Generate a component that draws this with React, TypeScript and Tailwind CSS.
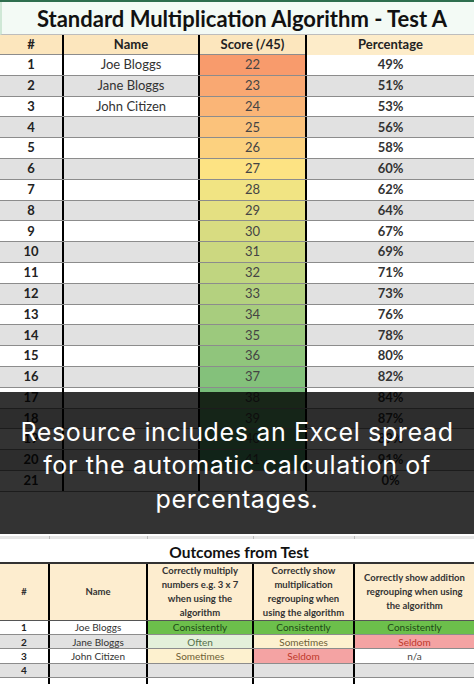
import React from 'react';

const scoreColors = [
  'bg-[#f89b6c]', 'bg-[#f9a872]', 'bg-[#fab577]', 'bg-[#fbc27b]', 'bg-[#fcd17f]',
  'bg-[#fde383]', 'bg-[#f1e483]', 'bg-[#e4e082]', 'bg-[#d8dc81]', 'bg-[#ccd880]',
  'bg-[#c0d580]', 'bg-[#b4d17f]', 'bg-[#a8cd7e]', 'bg-[#9cc97d]', 'bg-[#90c57c]',
  'bg-[#84c17b]', 'bg-[#78bd7a]', 'bg-[#6cb979]', 'bg-[#60b578]', 'bg-[#54b177]', 'bg-white',
];

const percents = [
  '49%', '51%', '53%', '56%', '58%', '60%', '62%', '64%', '67%', '69%', '71%',
  '73%', '76%', '78%', '80%', '82%', '84%', '87%', '89%', '91%', '0%',
];

const names = ['Joe Bloggs', 'Jane Bloggs', 'John Citizen'];

type Outcome = 'Consistently' | 'Often' | 'Sometimes' | 'Seldom' | 'n/a' | '';

const outcomeStyle: Record<Outcome, string> = {
  Consistently: 'bg-[#6cbf4b] text-[#1d4a17]',
  Often: 'bg-[#e3f0da] text-[#55704a]',
  Sometimes: 'bg-[#fdf1cf] text-[#6e5f35]',
  Seldom: 'bg-[#f4a3a3] text-[#c0392b]',
  'n/a': 'bg-white text-[#444]',
  '': '',
};

const outcomes: { name: string; cells: Outcome[] }[] = [
  { name: 'Joe Bloggs', cells: ['Consistently', 'Consistently', 'Consistently'] },
  { name: 'Jane Bloggs', cells: ['Often', 'Sometimes', 'Seldom'] },
  { name: 'John Citizen', cells: ['Sometimes', 'Seldom', 'n/a'] },
  { name: '', cells: ['', '', ''] },
  { name: '', cells: ['', '', ''] },
];

const App: React.FC = () => {
  return (
    <div className="w-[474px] h-[684px] overflow-hidden bg-white font-['Lato',sans-serif] text-[#222]">
      {/* Top sheet with overlay */}
      <div className="relative">
        <div className="h-[2px] bg-[#2e6e4e]" />
        <div className="h-[33px] bg-[#f3faf5] border-b border-[#bdbdbd] border-l-2 border-l-[#cfe8d6] flex items-center justify-center pl-[8px]">
          <h1 className="text-[22px] font-bold text-[#111]">
            Standard Multiplication Algorithm - Test A
          </h1>
        </div>
        <div className="grid grid-cols-[64px_136px_107px_167px] h-[20px] bg-[#fce6bd] border-b border-[#8c8c8c] text-[13px] font-bold text-[#222]">
          <div className="border-r-2 border-black flex items-center justify-center">#</div>
          <div className="border-r-2 border-black flex items-center justify-center">Name</div>
          <div className="border-r-2 border-black flex items-center justify-center">Score (/45)</div>
          <div className="bg-[#fdecc9] flex items-center justify-center">Percentage</div>
        </div>

        {percents.map((pct, i) => {
          const alt = i % 2 === 1 ? 'bg-[#e1e1e1]' : 'bg-white';
          return (
            <div
              key={i}
              className="grid grid-cols-[64px_136px_107px_167px] h-[20.8px] border-b-[1.5px] border-[#8c8c8c] text-[13px]"
            >
              <div className={`${alt} border-r-2 border-black flex items-center justify-center font-bold`}>
                {i + 1}
              </div>
              <div className={`${alt} border-r-2 border-black flex items-center justify-center text-[#333]`}>
                {names[i] ?? ''}
              </div>
              <div className={`${scoreColors[i]} border-r-2 border-black flex items-center justify-center text-[#444]`}>
                {i < 20 ? 22 + i : ''}
              </div>
              <div className={`${alt} flex items-center justify-center font-bold text-[#333]`}>{pct}</div>
            </div>
          );
        })}
        <div className="h-[43px] bg-white" />

        <div className="absolute left-0 right-0 top-[392px] h-[142px] bg-black/80 flex items-center justify-center pt-[6px]">
          <p className="font-['Inter',sans-serif] text-[25px] leading-[33.5px] text-white text-center tracking-[0.65px]">
            Resource includes an Excel spread
            <br />
            for the automatic calculation of
            <br />
            percentages.
          </p>
        </div>
      </div>

      {/* Outcomes table */}
      <div className="grid grid-cols-[50px_98px_106px_101px_119px] h-[4px] bg-[#e6e6e6] border-t border-white">
        <div className="border-r border-[#bbb]" />
        <div className="border-r border-[#bbb]" />
        <div className="border-r border-[#bbb]" />
        <div className="border-r border-[#bbb]" />
        <div />
      </div>
      <div className="h-[23px] flex items-center justify-center pl-[4px] pt-[4px] text-[15.5px] font-bold text-[#111]">
        Outcomes from Test
      </div>
      <div className="grid grid-cols-[50px_98px_106px_101px_119px] h-[59px] bg-[#fdedcf] border-t-2 border-[#333] border-b border-b-[#555] text-[9.5px] leading-[14px] font-bold text-[#333] text-center">
        <div className="border-r-2 border-black flex items-center justify-center">#</div>
        <div className="border-r-2 border-black flex items-center justify-center">Name</div>
        <div className="border-r-2 border-black flex items-center justify-center">
          Correctly multiply
          <br />
          numbers e.g. 3 x 7
          <br />
          when using the
          <br />
          algorithm
        </div>
        <div className="border-r-2 border-black flex items-center justify-center">
          Correctly show
          <br />
          multiplication
          <br />
          regrouping when
          <br />
          using the algorithm
        </div>
        <div className="flex items-center justify-center">
          Correctly show addition
          <br />
          regrouping when using
          <br />
          the algorithm
        </div>
      </div>
      {outcomes.map((row, i) => {
        const alt = i % 2 === 1 ? 'bg-[#e1e1e1]' : 'bg-white';
        return (
          <div
            key={i}
            className="grid grid-cols-[50px_98px_106px_101px_119px] h-[14.3px] border-b border-[#8c8c8c] text-[10px] leading-none"
          >
            <div className={`${alt} border-r-2 border-black flex items-center justify-center font-bold`}>{i + 1 <= 4 ? i + 1 : ''}</div>
            <div className={`${alt} border-r-2 border-black flex items-center justify-center text-[#333]`}>{row.name}</div>
            {row.cells.map((c, j) => (
              <div
                key={j}
                className={`${c ? outcomeStyle[c] : alt} ${j < 2 ? 'border-r-2 border-black' : ''} flex items-center justify-center`}
              >
                {c}
              </div>
            ))}
          </div>
        );
      })}
    </div>
  );
};

export default App;
